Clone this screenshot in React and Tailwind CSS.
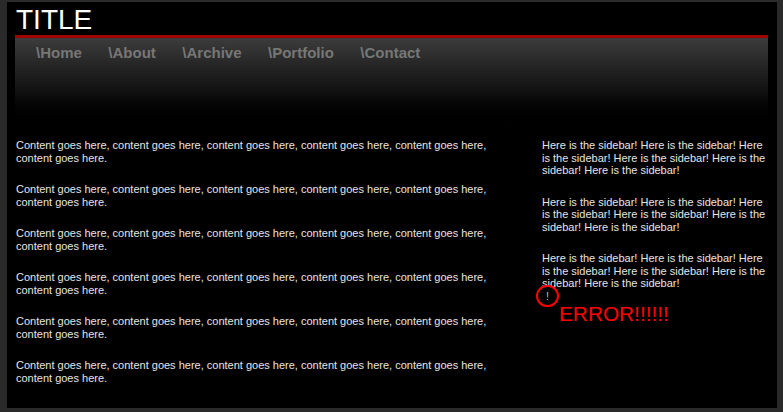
import React from 'react';

const navItems = ['\\Home', '\\About', '\\Archive', '\\Portfolio', '\\Contact'];
const content = 'Content goes here, content goes here, content goes here, content goes here, content goes here, content goes here.';
const side = 'Here is the sidebar! Here is the sidebar! Here is the sidebar! Here is the sidebar! Here is the sidebar! Here is the sidebar!';

export default function App() {
  return (
    <div className="w-[783px] h-[412px] overflow-hidden bg-[#2a2a2a] pl-[7px] pt-[2px] pr-[6px] pb-[4px]" style={{ fontFamily: '"Liberation Sans", Arial, sans-serif' }}>
      <div className="h-full bg-black">
        <div className="h-[33px] pl-[9px] pt-[3px] text-[28px] leading-[30px] text-white">TITLE</div>
        <div className="ml-[8px] w-[753px] h-[98px] border-t-[3px] border-[#a00000] bg-gradient-to-b from-[#3c3c3c] via-[#161616] to-black">
          <div className="flex gap-[26.5px] pl-[21px] pt-[4px] text-[15px] font-bold text-[#777]">
            {navItems.map((n) => <span key={n}>{n}</span>)}
          </div>
        </div>
        <div className="flex pl-[9px] pt-[6px] text-[11px] leading-[12.5px] text-[#e6e6e6]">
          <div className="w-[526px] pr-[30px] flex flex-col gap-[19px]">
            {[0, 1, 2, 3, 4, 5].map((i) => <p key={i}>{content}</p>)}
          </div>
          <div className="relative w-[226px] flex flex-col gap-[19px]">
            <p>{side}</p>
            <p>{side}</p>
            <div>
              <p>{side}</p>
              <p className="pl-[4px] text-[#bbb]">!</p>
            </div>
            <div className="absolute left-[-6px] top-[146px] w-[23px] h-[22px] rounded-full border-2 border-[#f00]" />
            <div className="absolute left-[17px] top-[164px] text-[20.8px] leading-[22px] text-[#f00]">ERROR!!!!!!</div>
          </div>
        </div>
      </div>
    </div>
  );
}
